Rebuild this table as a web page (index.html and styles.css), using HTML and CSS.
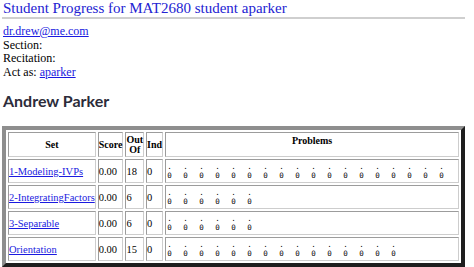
FILE: index.html
```html
<!DOCTYPE html>
<html>
<head>
<meta charset="utf-8">
<title>Student Progress</title>
<link rel="stylesheet" href="styles.css">
</head>
<body>
<h1 class="title">Student Progress for MAT2680 student aparker</h1>
<div class="info">
<a href="#">dr.drew@me.com</a><br>
Section:<br>
Recitation:<br>
Act as: <a href="#">aparker</a>
</div>
<h2 class="name">Andrew Parker</h2>
<table class="progress">
<tr class="head">
<th class="set">Set</th><th>Score</th><th>Out<br>Of</th><th>Ind</th><th class="probs-head"><span>Problems</span></th>
</tr>
<tr>
<td class="set"><a href="#">1-Modeling-IVPs</a></td><td>0.00</td><td>18</td><td>0</td>
<td class="probs"><span class="p">.<br>0</span><span class="p">.<br>0</span><span class="p">.<br>0</span><span class="p">.<br>0</span><span class="p">.<br>0</span><span class="p">.<br>0</span><span class="p">.<br>0</span><span class="p">.<br>0</span><span class="p">.<br>0</span><span class="p">.<br>0</span><span class="p">.<br>0</span><span class="p">.<br>0</span><span class="p">.<br>0</span><span class="p">.<br>0</span><span class="p">.<br>0</span><span class="p">.<br>0</span><span class="p">.<br>0</span><span class="p">.<br>0</span></td>
</tr>
<tr>
<td class="set"><a href="#">2-IntegratingFactors</a></td><td>0.00</td><td>6</td><td>0</td>
<td class="probs"><span class="p">.<br>0</span><span class="p">.<br>0</span><span class="p">.<br>0</span><span class="p">.<br>0</span><span class="p">.<br>0</span><span class="p">.<br>0</span></td>
</tr>
<tr>
<td class="set"><a href="#">3-Separable</a></td><td>0.00</td><td>6</td><td>0</td>
<td class="probs"><span class="p">.<br>0</span><span class="p">.<br>0</span><span class="p">.<br>0</span><span class="p">.<br>0</span><span class="p">.<br>0</span><span class="p">.<br>0</span></td>
</tr>
<tr>
<td class="set"><a href="#">Orientation</a></td><td>0.00</td><td>15</td><td>0</td>
<td class="probs"><span class="p">.<br>0</span><span class="p">.<br>0</span><span class="p">.<br>0</span><span class="p">.<br>0</span><span class="p">.<br>0</span><span class="p">.<br>0</span><span class="p">.<br>0</span><span class="p">.<br>0</span><span class="p">.<br>0</span><span class="p">.<br>0</span><span class="p">.<br>0</span><span class="p">.<br>0</span><span class="p">.<br>0</span><span class="p">.<br>0</span><span class="p">.<br>0</span></td>
</tr>
</table>
</body>
</html>
```
FILE: styles.css
```css
html, body {
  background: #ffffff;
}
body {
  margin: 0 9px 0 2px;
  font-family: "Liberation Serif", "Times New Roman", serif;
  color: #000;
}
a {
  color: #1a1ae0;
  text-decoration: underline;
}
.title {
  margin: 0 -9px 0 0;
  padding-left: 1px;
  font-family: "Liberation Serif", serif;
  font-weight: normal;
  font-size: 15px;
  line-height: 17px;
  color: #2323d2;
  border-bottom: 2px solid #cfcfcf;
}
.info {
  margin-top: 6px;
  padding-left: 1px;
  font-size: 12px;
  line-height: 13.6px;
}
.name {
  margin: 12px 0 0 0;
  padding-left: 1px;
  font-family: Lato, "Open Sans", sans-serif;
  font-weight: bold;
  font-size: 16px;
  line-height: 20px;
  color: #2c2c3a;
}
.progress {
  margin-top: 15px;
  width: 463px;
  border-collapse: separate;
  border-spacing: 2px;
  border-style: solid;
  border-width: 4px;
  border-color: #8e8e8e #1e1e1e #1e1e1e #8e8e8e;
}
.progress th,
.progress td {
  padding: 0;
  border-style: solid;
  border-width: 1px;
  border-color: #9c9c9c #cdcdcd #cdcdcd #9c9c9c;
  white-space: nowrap;
  vertical-align: middle;
}
.progress th {
  height: 23px;
  font-size: 10px;
  line-height: 10px;
  font-weight: bold;
  text-align: center;
}
.progress td {
  height: 22px;
  font-size: 10.5px;
  text-align: left;
}
.progress .probs-head {
  width: 100%;
}
.probs-head span {
  display: block;
  padding-bottom: 7px;
}
.progress td.probs {
  font-family: "DejaVu Sans Mono", "Liberation Mono", monospace;
  font-size: 7.5px;
  line-height: 9px;
  padding: 0 0 0 1px;
}
.p {
  display: inline-block;
  width: 16px;
  vertical-align: middle;
}
```
